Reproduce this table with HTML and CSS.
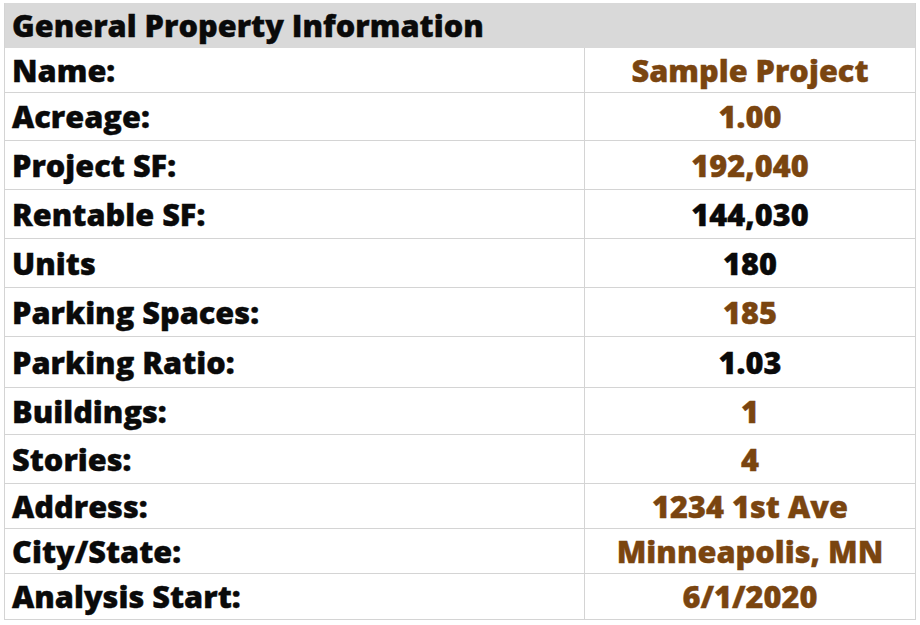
FILE: index.html
```html
<!DOCTYPE html>
<html>
<head>
<meta charset="utf-8">
<link rel="stylesheet" href="styles.css">
</head>
<body>
<div class="sheet">
  <div class="row head short"><div class="cell label">General Property Information</div><div class="cell value"></div></div>
  <div class="row short"><div class="cell label">Name:</div><div class="cell value brown">Sample Project</div></div>
  <div class="row r48"><div class="cell label">Acreage:</div><div class="cell value brown">1.00</div></div>
  <div class="row"><div class="cell label">Project SF:</div><div class="cell value brown">192,040</div></div>
  <div class="row"><div class="cell label">Rentable SF:</div><div class="cell value">144,030</div></div>
  <div class="row"><div class="cell label">Units</div><div class="cell value">180</div></div>
  <div class="row"><div class="cell label">Parking Spaces:</div><div class="cell value brown">185</div></div>
  <div class="row r51"><div class="cell label">Parking Ratio:</div><div class="cell value">1.03</div></div>
  <div class="row r47"><div class="cell label">Buildings:</div><div class="cell value brown">1</div></div>
  <div class="row"><div class="cell label">Stories:</div><div class="cell value brown">4</div></div>
  <div class="row short"><div class="cell label">Address:</div><div class="cell value brown">1234 1st Ave</div></div>
  <div class="row short"><div class="cell label">City/State:</div><div class="cell value brown">Minneapolis, MN</div></div>
  <div class="row r46"><div class="cell label">Analysis Start:</div><div class="cell value brown">6/1/2020</div></div>
</div>
</body>
</html>
```
FILE: styles.css
```css
html, body {
  margin: 0;
  padding: 0;
  background: #ffffff;
}
body {
  padding: 3px 0 0 4px;
  font-family: "Open Sans", "Liberation Sans", sans-serif;
  font-weight: 800;
  font-size: 30.7px;
  color: #0a0a0a;
  -webkit-text-stroke: 0.4px currentColor;
}
.sheet {
  width: 910px;
  border-left: 1px solid #d4d4d4;
  border-right: 1px solid #d4d4d4;
}
.row {
  display: grid;
  grid-template-columns: 580px 1fr;
  height: 49px;
  border-bottom: 1px solid #d4d4d4;
  box-sizing: border-box;
}
.row.short { height: 45px; }
.row.r48 { height: 48px; }
.row.r51 { height: 51px; }
.row.r47 { height: 47px; }
.row.r46 { height: 46px; }
.row.head {
  background: #d9d9d9;
  border-bottom-color: #d9d9d9;
}
.row.head .cell.label { border-right-color: #d9d9d9; }
.cell {
  display: flex;
  align-items: center;
  line-height: 1;
  white-space: nowrap;
}
.cell.label {
  padding-left: 7px;
  border-right: 1px solid #d4d4d4;
}
.cell.value {
  justify-content: center;
}
.brown { color: #7a4510; }
```
